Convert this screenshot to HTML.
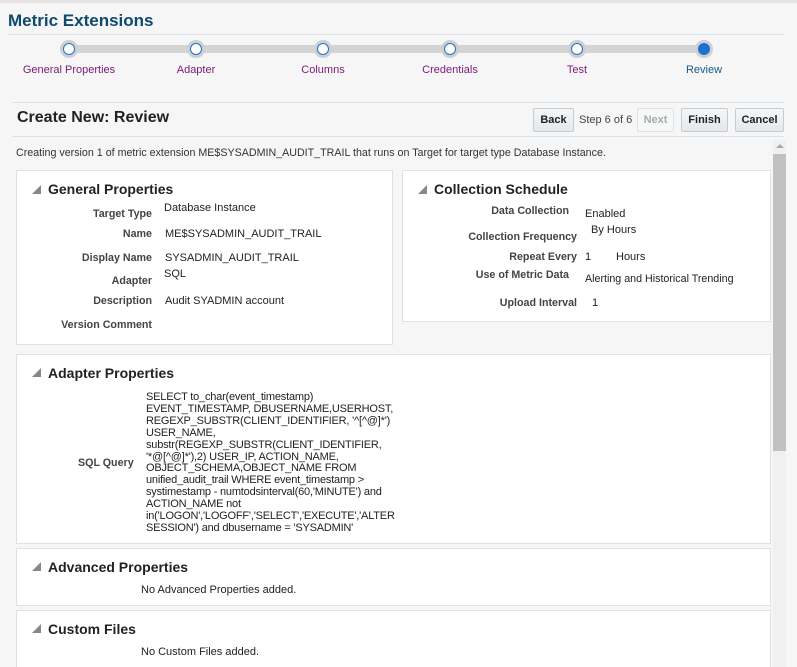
<!DOCTYPE html>
<html><head><meta charset="utf-8"><style>
*{margin:0;padding:0;box-sizing:border-box}
html{width:797px;height:667px;overflow:hidden}
body{width:797px;height:667px;overflow:hidden;background:#f6f6f6;font-family:"Liberation Sans",Arial,sans-serif;position:relative;color:#333}
.a{position:absolute;white-space:nowrap}
.hl{position:absolute;height:1px;background:#d9e2ea}
.c{position:absolute;width:18px;height:18px;border-radius:50%;background:#cfcfcf}
.c i{position:absolute;left:3px;top:3px;width:12px;height:12px;border-radius:50%;background:#fff;border:1.5px solid #1a73d1}
.lbl{position:absolute;top:63px;font-size:11px;color:#7b1a78;transform:translateX(-50%)}
.btn{position:absolute;top:108px;height:24px;border:1px solid #c4ccd3;background:linear-gradient(#f5f6f7,#e4e8eb);font-size:11px;font-weight:bold;color:#222;text-align:center;line-height:22px;border-radius:2px}
.p{position:absolute;background:#fff;border:1px solid #dbe2e8}
.ph{position:absolute;font-size:14px;font-weight:bold;color:#222;left:31px}
.tri{position:absolute;left:15px;width:0;height:0;border-left:9px solid transparent;border-bottom:9px solid #888}
.k{position:absolute;font-size:10.7px;font-weight:bold;color:#444;text-align:right;white-space:nowrap}
.v{position:absolute;font-size:11px;color:#222;white-space:nowrap}
</style></head><body>
<div class="a" style="left:0;top:0;width:797px;height:3px;background:#e3e3e3"></div>
<div class="a" style="left:8px;top:11px;font-size:17px;font-weight:bold;color:#0c4a6e">Metric Extensions</div>
<div class="hl" style="left:8px;top:34px;width:776px"></div>
<div class="a" style="left:69px;top:45px;width:635px;height:8px;background:#d4d4d4"></div>
<div class="c" style="left:60px;top:40px"><i></i></div>
<div class="c" style="left:187px;top:40px"><i></i></div>
<div class="c" style="left:314px;top:40px"><i></i></div>
<div class="c" style="left:441px;top:40px"><i></i></div>
<div class="c" style="left:568px;top:40px"><i></i></div>
<div class="c" style="left:695px;top:40px"><i style="background:#1a73d1"></i></div>
<div class="lbl" style="left:69px;top:64px">General Properties</div>
<div class="lbl" style="left:196px;top:64px">Adapter</div>
<div class="lbl" style="left:323px;top:64px">Columns</div>
<div class="lbl" style="left:450px;top:64px">Credentials</div>
<div class="lbl" style="left:577px;top:64px">Test</div>
<div class="lbl" style="left:704px;top:64px;color:#145a8c">Review</div>
<div class="hl" style="left:12px;top:102px;width:772px"></div>
<div class="a" style="left:17px;top:109px;font-size:16px;font-weight:bold;color:#222">Create New: Review</div>
<div class="btn" style="left:533px;width:41px">Back</div>
<div class="a" style="left:579px;top:114px;font-size:11px;color:#444">Step 6 of 6</div>
<div class="btn" style="left:637px;width:37px;color:#aaa;background:#f7f8f8;border-color:#dde2e6">Next</div>
<div class="btn" style="left:681px;width:47px">Finish</div>
<div class="btn" style="left:735px;width:49px">Cancel</div>
<div class="hl" style="left:12px;top:136px;width:772px"></div>
<div class="a" style="left:16px;top:147px;font-size:10.7px;color:#333">Creating version 1 of metric extension ME$SYSADMIN_AUDIT_TRAIL that runs on Target for target type Database Instance.</div>
<div class="a" style="left:773px;top:140px;width:13px;height:527px;background:#f0f0f0"></div>
<div class="a" style="left:776px;top:144px;width:0;height:0;border-left:4px solid transparent;border-right:4px solid transparent;border-bottom:4px solid #aaa"></div>
<div class="a" style="left:773px;top:154px;width:13px;height:297px;background:#c1c1c1"></div>

<div class="p" style="left:16px;top:170px;width:377px;height:175px">
<div class="tri" style="top:14px"></div><div class="ph" style="top:10px">General Properties</div>
<div class="k" style="right:240px;top:37px">Target Type</div><div class="v" style="left:147px;top:31px">Database Instance</div>
<div class="k" style="right:240px;top:57px">Name</div><div class="v" style="left:148px;top:57px">ME$SYSADMIN_AUDIT_TRAIL</div>
<div class="k" style="right:240px;top:81px">Display Name</div><div class="v" style="left:148px;top:81px">SYSADMIN_AUDIT_TRAIL</div>
<div class="k" style="right:240px;top:104px">Adapter</div><div class="v" style="left:147px;top:97px">SQL</div>
<div class="k" style="right:240px;top:124px">Description</div><div class="v" style="left:148px;top:124px">Audit SYADMIN account</div>
<div class="k" style="right:240px;top:148px">Version Comment</div>
</div>

<div class="p" style="left:402px;top:170px;width:369px;height:152px">
<div class="tri" style="top:14px"></div><div class="ph" style="top:10px">Collection Schedule</div>
<div class="k" style="right:201px;top:34px">Data Collection</div><div class="v" style="left:182px;top:37px">Enabled</div>
<div class="k" style="right:193px;top:60px">Collection Frequency</div><div class="v" style="left:188px;top:53px">By Hours</div>
<div class="k" style="right:193px;top:80px">Repeat Every</div><div class="v" style="left:182px;top:80px">1</div><div class="v" style="left:213px;top:80px">Hours</div>
<div class="k" style="right:201px;top:98px">Use of Metric Data</div><div class="v" style="left:182px;top:102px;font-size:10.7px">Alerting and Historical Trending</div>
<div class="k" style="right:193px;top:126px">Upload Interval</div><div class="v" style="left:189px;top:126px">1</div>
</div>

<div class="p" style="left:16px;top:354px;width:755px;height:190px">
<div class="tri" style="top:13px"></div><div class="ph" style="top:10px">Adapter Properties</div>
<div class="k" style="left:61px;top:102px">SQL Query</div>
<div class="v" style="left:129px;top:37px;font-size:11px;line-height:11.9px;letter-spacing:-0.2px;white-space:normal;width:280px">SELECT to_char(event_timestamp)<br>EVENT_TIMESTAMP, DBUSERNAME,USERHOST,<br>REGEXP_SUBSTR(CLIENT_IDENTIFIER, '^[^@]*')<br>USER_NAME,<br>substr(REGEXP_SUBSTR(CLIENT_IDENTIFIER,<br>'*@[^@]*'),2) USER_IP, ACTION_NAME,<br>OBJECT_SCHEMA,OBJECT_NAME FROM<br>unified_audit_trail WHERE event_timestamp &gt;<br>systimestamp - numtodsinterval(60,'MINUTE') and<br>ACTION_NAME not<br>in('LOGON','LOGOFF','SELECT','EXECUTE','ALTER<br>SESSION') and dbusername = 'SYSADMIN'</div>
</div>

<div class="p" style="left:16px;top:548px;width:755px;height:58px">
<div class="tri" style="top:13px"></div><div class="ph" style="top:10px">Advanced Properties</div>
<div class="v" style="left:124px;top:35px">No Advanced Properties added.</div>
</div>

<div class="p" style="left:16px;top:610px;width:755px;height:70px">
<div class="tri" style="top:13px"></div><div class="ph" style="top:10px">Custom Files</div>
<div class="v" style="left:124px;top:35px">No Custom Files added.</div>
</div>
</body></html>
